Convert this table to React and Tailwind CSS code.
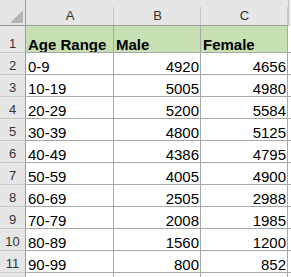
import React from "react";

const rows = [
  ["0-9", "4920", "4656"],
  ["10-19", "5005", "4980"],
  ["20-29", "5200", "5584"],
  ["30-39", "4800", "5125"],
  ["40-49", "4386", "4795"],
  ["50-59", "4005", "4900"],
  ["60-69", "2505", "2988"],
  ["70-79", "2008", "1985"],
  ["80-89", "1560", "1200"],
  ["90-99", "800", "852"],
];

const font = { fontFamily: '"Liberation Sans", Arial, sans-serif' };

function ColHead({ label, w }) {
  return (
    <div
      className={`relative flex items-end justify-center ${w} h-[26px] border-b border-[#9b9b9b] bg-[#e6e6e6] pb-[3px] text-[13px] leading-none text-[#333]`}
    >
      {label}
      <span className="absolute right-0 top-[7px] bottom-0 w-px bg-[#c4c4c4]" />
    </div>
  );
}

function RowHead({ n, h }) {
  return (
    <div
      className={`flex items-end justify-center w-[26px] ${h} border-r border-b border-r-[#9b9b9b] border-b-[#c8c8c8] bg-[#e6e6e6] pb-[2px] text-[13px] leading-none text-[#333]`}
    >
      {n}
    </div>
  );
}

function Cell({ children, w, h, right, bold, green }) {
  return (
    <div
      className={`flex items-end ${w} ${h} border-r border-b border-[#a8a8a8] ${
        right ? "justify-end pr-px" : "pl-[2px]"
      } ${green ? "bg-[#c6e0b4]" : "bg-white"} ${
        bold ? "font-bold" : ""
      } text-[15px] leading-none text-black whitespace-nowrap overflow-hidden`}
    >
      {children}
    </div>
  );
}

export default function App() {
  return (
    <div
      className="w-[291px] h-[277px] overflow-hidden bg-white flex flex-col"
      style={font}
    >
      {/* header row */}
      <div className="flex shrink-0">
        <div className="relative w-[26px] h-[26px] border-r border-b border-[#9b9b9b] bg-[#e6e6e6]">
          <svg
            className="absolute left-[10px] top-[10px]"
            width="13"
            height="13"
            viewBox="0 0 13 13"
          >
            <polygon points="13,0 13,13 0,13" fill="#b5b5b5" />
          </svg>
        </div>
        <ColHead label="A" w="w-[88px]" />
        <ColHead label="B" w="w-[87px]" />
        <ColHead label="C" w="w-[87px]" />
        <div className="flex-1 h-[26px] bg-[#ececec] border-l border-[#c4c4c4]" />
      </div>

      {/* row 1 */}
      <div className="flex shrink-0">
        <RowHead n="1" h="h-[27px]" />
        <Cell w="w-[88px]" h="h-[27px]" bold green>
          Age Range
        </Cell>
        <Cell w="w-[87px]" h="h-[27px]" bold green>
          Male
        </Cell>
        <Cell w="w-[87px]" h="h-[27px]" bold green>
          Female
        </Cell>
        <div className="flex-1 h-[27px] border-b border-[#a8a8a8]" />
      </div>

      {rows.map((r, i) => (
        <div key={i} className="flex shrink-0">
          <RowHead n={String(i + 2)} h="h-[22px]" />
          <Cell w="w-[88px]" h="h-[22px]">
            {r[0]}
          </Cell>
          <Cell w="w-[87px]" h="h-[22px]" right>
            {r[1]}
          </Cell>
          <Cell w="w-[87px]" h="h-[22px]" right>
            {r[2]}
          </Cell>
          <div className="flex-1 h-[22px] border-b border-[#a8a8a8]" />
        </div>
      ))}

      {/* partial row 12 */}
      <div className="flex flex-1">
        <div className="w-[26px] border-r border-[#9b9b9b] bg-[#e6e6e6]" />
        <div className="w-[88px] border-r border-[#a8a8a8]" />
        <div className="w-[87px] border-r border-[#a8a8a8]" />
        <div className="w-[87px] border-r border-[#a8a8a8]" />
        <div className="flex-1" />
      </div>
    </div>
  );
}
